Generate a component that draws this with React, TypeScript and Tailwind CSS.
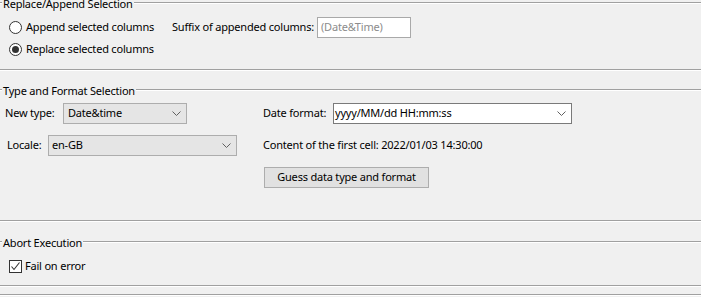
import React from "react";

function Rule() {
  return <div className="h-[2px] border-t border-t-[#a0a0a0] border-b border-b-white" />;
}

function TitleRow({ title }: { title: string }) {
  return (
    <div className="flex h-[16px] items-center">
      <div className="w-[2px] h-[2px] border-t border-t-[#a0a0a0] border-b border-b-white" />
      <span className="px-[1px] leading-none whitespace-nowrap">{title}</span>
      <div className="flex-1 h-[2px] border-t border-t-[#a0a0a0] border-b border-b-white" />
    </div>
  );
}

function Chevron() {
  return (
    <svg width="9" height="5" viewBox="0 0 9 5" className="shrink-0">
      <path d="M0.5 0.5 L4.5 4.5 L8.5 0.5" fill="none" stroke="#606060" strokeWidth="1" />
    </svg>
  );
}

function Radio({ checked, label }: { checked?: boolean; label: string }) {
  return (
    <div className="flex items-center gap-[4px] whitespace-nowrap">
      <span className="ml-[9px] flex h-[13px] w-[13px] items-center justify-center rounded-full border border-[#333] bg-white">
        {checked && <span className="h-[7px] w-[7px] rounded-full bg-[#333]" />}
      </span>
      <span>{label}</span>
    </div>
  );
}

export default function App() {
  return (
    <div
      className="w-[701px] h-[297px] overflow-hidden bg-[#f0f0f0] text-[11px] tracking-[-0.2px] text-black whitespace-nowrap"
      style={{ fontFamily: "'Noto Sans', 'Open Sans', sans-serif" }}
    >
      {/* Replace/Append Selection */}
      <div className="-mt-[5px]">
        <TitleRow title="Replace/Append Selection" />
        <div className="pt-[5px] pb-[9px]">
          <div className="flex h-[22px] items-center">
            <div className="w-[172px] shrink-0">
              <Radio label="Append selected columns" />
            </div>
            <span className="w-[145px] shrink-0">Suffix of appended columns:</span>
            <div className="flex h-[21px] w-[94px] items-center border border-[#a9a9a9] bg-white pl-[3px] text-[#8c8c8c]">
              (Date&amp;Time)
            </div>
          </div>
          <div className="flex h-[22px] items-center">
            <Radio checked label="Replace selected columns" />
          </div>
        </div>
        <Rule />
      </div>

      {/* Type and Format Selection */}
      <div className="mt-[11px]">
        <TitleRow title="Type and Format Selection" />
        <div className="flex flex-col gap-[11px] pt-[5px] pb-[32px]">
          <div className="flex h-[21px] items-center">
            <div className="flex w-[263px] shrink-0 items-center">
              <span className="ml-[5px] w-[58px] shrink-0">New type:</span>
              <div className="flex h-[21px] w-[124px] items-center justify-between border border-[#adadad] bg-[#e5e5e5] pl-[4px] pr-[5px]">
                <span>Date&amp;time</span>
                <Chevron />
              </div>
            </div>
            <span className="w-[70px] shrink-0">Date format:</span>
            <div className="flex h-[21px] w-[239px] items-center justify-between border border-[#7a7a7a] bg-white pl-[1px] pr-[5px]">
              <span>yyyy/MM/dd HH:mm:ss</span>
              <Chevron />
            </div>
          </div>
          <div className="flex h-[21px] items-center">
            <div className="flex w-[263px] shrink-0 items-center">
              <span className="ml-[7px] w-[41px] shrink-0">Locale:</span>
              <div className="flex h-[21px] w-[189px] items-center justify-between border border-[#adadad] bg-[#e5e5e5] pl-[3px] pr-[5px]">
                <span>en-GB</span>
                <Chevron />
              </div>
            </div>
            <span>Content of the first cell: 2022/01/03 14:30:00</span>
          </div>
          <div className="flex h-[21px] items-center">
            <button className="ml-[264px] flex h-[21px] w-[165px] items-center justify-center border border-[#adadad] bg-[#e1e1e1]">
              Guess data type and format
            </button>
          </div>
        </div>
        <Rule />
      </div>

      {/* Abort Execution */}
      <div className="mt-[12px]">
        <TitleRow title="Abort Execution" />
        <div className="pt-[8px] pb-[11px]">
          <div className="flex h-[16px] items-center gap-[3px]">
            <span className="ml-[9px] flex h-[13px] w-[13px] items-center justify-center border border-[#333] bg-white">
              <svg width="11" height="11" viewBox="0 0 11 11">
                <path d="M1.5 5.5 L4 8.5 L9.5 1.5" fill="none" stroke="#333" strokeWidth="1.1" />
              </svg>
            </span>
            <span>Fail on error</span>
          </div>
        </div>
        <Rule />
      </div>

      <div className="mt-[7px]">
        <Rule />
      </div>
    </div>
  );
}
